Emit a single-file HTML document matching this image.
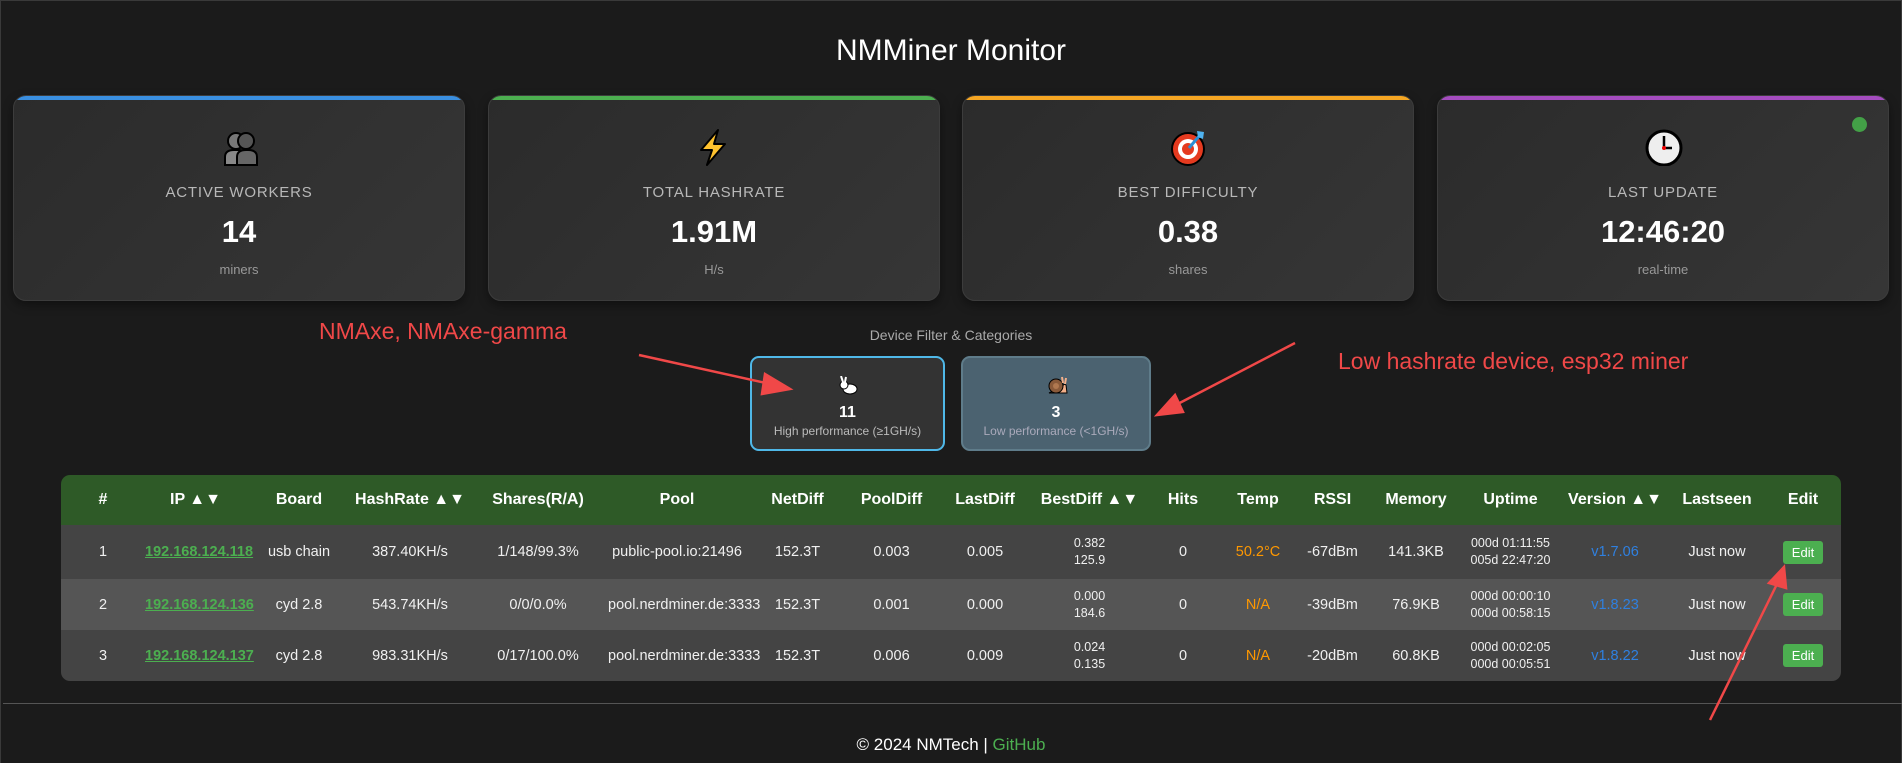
<!DOCTYPE html>
<html><head><meta charset="utf-8"><style>
*{box-sizing:border-box;margin:0;padding:0}
body{width:1902px;height:763px;background:#1b1b1b;font-family:"Liberation Sans",sans-serif;color:#fff;position:relative;overflow:hidden}
.frame{position:absolute;left:0;top:0;width:1902px;height:763px;border:1px solid #3a3a3a;border-bottom:none}
h1{position:absolute;top:34px;left:0;width:1902px;text-align:center;font-weight:normal;font-size:30px;color:#fff}
.card{position:absolute;top:95px;width:452px;height:206px;border-radius:13px;background:linear-gradient(135deg,#2b2b2b,#363636);border:1px solid #3c3c3c;overflow:hidden;text-align:center;box-shadow:0 4px 10px rgba(0,0,0,.4)}
.card .bar{position:absolute;top:0;left:0;right:0;height:4px}
.card .ic{position:absolute;top:32px;left:0;right:0;height:38px}
.card .lb{position:absolute;top:88px;left:0;right:0;font-size:15px;letter-spacing:.8px;color:#b8b8b8}
.card .v{position:absolute;top:118px;left:0;right:0;font-size:31px;font-weight:bold}
.card .s{position:absolute;top:166px;left:0;right:0;font-size:13px;color:#999}
.dot{position:absolute;left:1852px;top:117px;width:15px;height:15px;border-radius:50%;background:#43a047}
.ft{position:absolute;top:327px;left:0;width:1902px;text-align:center;font-size:14px;color:#aaa}
.fb{position:absolute;top:356px;height:95px;border-radius:9px;text-align:center}
.fb .n{position:absolute;top:46px;left:0;right:0;font-size:16px;font-weight:bold}
.fb .t{position:absolute;top:66px;left:0;right:0;font-size:12px}
.ann{position:absolute;color:#f04848;font-size:23px}
table{position:absolute;left:61px;top:475px;width:1780px;border-collapse:collapse;border-radius:9px;overflow:hidden;table-layout:fixed}
th{background:#2e5a27;height:50px;font-size:16px;font-weight:bold;text-align:center}
td{height:51px;font-size:14.5px;text-align:center;color:#f0f0f0}
tr.a td{background:#444}
tr.b td{background:#555}
td.ip a{color:#4caf50;text-decoration:underline;font-weight:bold}
td.sm{font-size:12.5px;line-height:17px}
.or{color:#ff9800}.bl{color:#2f80e0}
.ed{display:inline-block;background:#4caf50;color:#fff;font-size:13px;padding:4px 9px;border-radius:3px}
hr{position:absolute;top:703px;left:3px;width:1899px;border:none;border-top:1px solid #555}
.foot{position:absolute;top:735px;left:0;width:1902px;text-align:center;font-size:17px}
.foot span{color:#4caf50}
</style></head><body>
<div class="frame"></div>
<h1>NMMiner Monitor</h1>

<div class="card" style="left:13px"><div class="bar" style="background:#3a8fe0"></div>
<svg class="ic" viewBox="0 0 452 38"><g stroke="#000" stroke-width="2"><circle cx="222" cy="13" r="8" fill="#777"/><circle cx="232" cy="13" r="8" fill="#555"/><path d="M211 37v-8q0-7 9-7h4q9 0 9 7v8z" fill="#888"/><path d="M223 37v-8q0-7 9-7h2q9 0 9 7v8z" fill="#666"/></g></svg>
<div class="lb">ACTIVE WORKERS</div><div class="v">14</div><div class="s">miners</div></div>

<div class="card" style="left:488px"><div class="bar" style="background:#4caf50"></div>
<svg class="ic" viewBox="0 0 452 38"><path d="M229 2 L212 22 H223 L218 37 L236 16 H225 Z" fill="#ffc22e" stroke="#000" stroke-width="2" stroke-linejoin="round"/></svg>
<div class="lb">TOTAL HASHRATE</div><div class="v">1.91M</div><div class="s">H/s</div></div>

<div class="card" style="left:962px"><div class="bar" style="background:#f5a623"></div>
<svg class="ic" viewBox="0 0 452 38"><circle cx="225" cy="21" r="16" fill="#e53a1f" stroke="#000" stroke-width="2"/><circle cx="225" cy="21" r="10" fill="#fff"/><circle cx="225" cy="21" r="6" fill="#e53a1f"/><path d="M226 20 L237 7" stroke="#2a8fd6" stroke-width="3"/><path d="M234 3 l7 1 -1 7 -5 -2z" fill="#4fb3f0"/></svg>
<div class="lb">BEST DIFFICULTY</div><div class="v">0.38</div><div class="s">shares</div></div>

<div class="card" style="left:1437px"><div class="bar" style="background:#a44cbf"></div>
<svg class="ic" viewBox="0 0 452 38"><circle cx="226" cy="20" r="17" fill="#eee" stroke="#000" stroke-width="3"/><path d="M226 20V8M226 20h8" stroke="#000" stroke-width="2.5"/><circle cx="226" cy="20" r="2" fill="#e00"/></svg>
<div class="lb">LAST UPDATE</div><div class="v">12:46:20</div><div class="s">real-time</div></div>
<div class="dot"></div>

<div class="ft">Device Filter &amp; Categories</div>
<div class="fb" style="left:750px;width:195px;background:#333;border:2px solid #4fb8e8">
<svg style="position:absolute;left:85px;top:18px" width="22" height="20" viewBox="0 0 22 20"><ellipse cx="13" cy="13" rx="7" ry="5" fill="#fff" stroke="#000"/><circle cx="7" cy="9" r="4" fill="#fff" stroke="#000"/><path d="M6 6 L4 0 M8 6 L9 1" stroke="#fff" stroke-width="2"/></svg>
<div class="n">11</div><div class="t" style="color:#bbb">High performance (≥1GH/s)</div></div>
<div class="fb" style="left:961px;width:190px;background:#4b6270;border:2px solid #5f7c8a">
<svg style="position:absolute;left:84px;top:17px" width="22" height="20" viewBox="0 0 22 20"><path d="M2 18 H20 L19 10 Q17 8 15 12 Z" fill="#f4b08a" stroke="#000"/><circle cx="9" cy="11" r="7" fill="#8a5a3a" stroke="#000"/><circle cx="9" cy="11" r="3" fill="#b07850"/><path d="M16 8 L15 2 M18 9 L19 3" stroke="#f4b08a" stroke-width="2"/></svg>
<div class="n">3</div><div class="t" style="color:#aab">Low performance (&lt;1GH/s)</div></div>

<div class="ann" style="left:319px;top:318px">NMAxe, NMAxe-gamma</div>
<div class="ann" style="left:1338px;top:348px">Low hashrate device, esp32 miner</div>

<table>
<colgroup><col style="width:84px"><col style="width:101px"><col style="width:106px"><col style="width:116px"><col style="width:140px"><col style="width:138px"><col style="width:103px"><col style="width:85px"><col style="width:102px"><col style="width:107px"><col style="width:80px"><col style="width:70px"><col style="width:79px"><col style="width:88px"><col style="width:101px"><col style="width:108px"><col style="width:96px"><col style="width:76px"></colgroup>
<tr><th>#</th><th>IP ▲▼</th><th>Board</th><th>HashRate ▲▼</th><th>Shares(R/A)</th><th>Pool</th><th>NetDiff</th><th>PoolDiff</th><th>LastDiff</th><th>BestDiff ▲▼</th><th>Hits</th><th>Temp</th><th>RSSI</th><th>Memory</th><th>Uptime</th><th>Version ▲▼</th><th>Lastseen</th><th>Edit</th></tr>
<tr class="a" style="height:54px"><td>1</td><td class="ip"><a>192.168.124.118</a></td><td>usb chain</td><td>387.40KH/s</td><td>1/148/99.3%</td><td>public-pool.io:21496</td><td>152.3T</td><td>0.003</td><td>0.005</td><td class="sm">0.382<br>125.9</td><td>0</td><td class="or">50.2°C</td><td>-67dBm</td><td>141.3KB</td><td class="sm">000d 01:11:55<br>005d 22:47:20</td><td class="bl">v1.7.06</td><td>Just now</td><td><span class="ed">Edit</span></td></tr>
<tr class="b"><td>2</td><td class="ip"><a>192.168.124.136</a></td><td>cyd 2.8</td><td>543.74KH/s</td><td>0/0/0.0%</td><td>pool.nerdminer.de:3333</td><td>152.3T</td><td>0.001</td><td>0.000</td><td class="sm">0.000<br>184.6</td><td>0</td><td class="or">N/A</td><td>-39dBm</td><td>76.9KB</td><td class="sm">000d 00:00:10<br>000d 00:58:15</td><td class="bl">v1.8.23</td><td>Just now</td><td><span class="ed">Edit</span></td></tr>
<tr class="a"><td>3</td><td class="ip"><a>192.168.124.137</a></td><td>cyd 2.8</td><td>983.31KH/s</td><td>0/17/100.0%</td><td>pool.nerdminer.de:3333</td><td>152.3T</td><td>0.006</td><td>0.009</td><td class="sm">0.024<br>0.135</td><td>0</td><td class="or">N/A</td><td>-20dBm</td><td>60.8KB</td><td class="sm">000d 00:02:05<br>000d 00:05:51</td><td class="bl">v1.8.22</td><td>Just now</td><td><span class="ed">Edit</span></td></tr>
</table>
<hr>
<svg style="position:absolute;left:0;top:0" width="1902" height="763"><g stroke="#f04848" stroke-width="2.5" fill="#f04848"><line x1="639" y1="355" x2="775" y2="385"/><path d="M790 389 L765 374 L762 394 Z"/><line x1="1295" y1="343" x2="1170" y2="408"/><path d="M1157 415 L1175 395 L1183 412 Z"/><line x1="1710" y1="720" x2="1778" y2="582"/><path d="M1784 567 L1769 583 L1786 588 Z"/></g></svg>
<div class="foot">© 2024 NMTech | <span>GitHub</span></div>
</body></html>
